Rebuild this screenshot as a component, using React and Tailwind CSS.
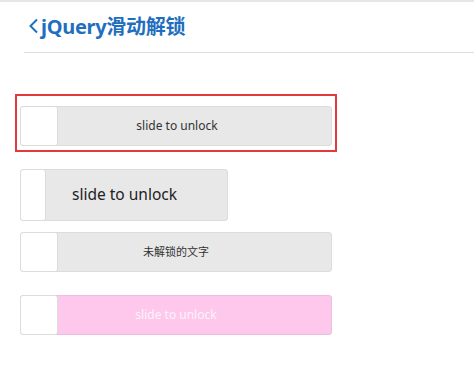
import React from "react";

function Slider({ className, handleW = "w-[38px]", children, textClass }) {
  return (
    <div className={"relative border border-[#dcdcdc] rounded-[3px] flex items-center justify-center " + className}>
      <div className={"absolute left-[-1px] top-[-1px] bottom-[-1px] bg-white border border-[#dcdcdc] rounded-[3px] " + handleW} />
      <span className={textClass}>{children}</span>
    </div>
  );
}

export default function App() {
  return (
    <div className="w-[474px] h-[373px] bg-white overflow-hidden" style={{ fontFamily: '"Noto Sans", "Noto Sans CJK SC", sans-serif' }}>
      <div className="h-[2px] bg-[#e6e6e6]" />
      <div className="ml-6 h-[51px] border-b border-[#dddddd] flex items-center pl-1">
        <svg width="11" height="16" viewBox="0 0 11 16" className="mr-[2px] mt-[-2px]">
          <path d="M9 1.5 L2.5 8 L9 14.5" fill="none" stroke="#1f6fbe" strokeWidth="2" />
        </svg>
        <span className="text-[20px] font-bold text-[#1f6fbe] leading-none tracking-[-0.3px]">jQuery滑动解锁</span>
      </div>
      <div className="mt-[41px] ml-[15px] w-[322px] h-[58px] border-2 border-[#e5383b] pt-[10px] pl-[3px]">
        <Slider className="w-[312px] h-[40px] bg-[#e8e8e8]" textClass="text-[12px] text-[#333] ml-[2px]">slide to unlock</Slider>
      </div>
      <div className="ml-5 mt-[17px]">
        <Slider className="w-[208px] h-[52px] bg-[#e8e8e8]" handleW="w-[26px]" textClass="text-[15.5px] text-[#222] ml-[1px]">slide to unlock</Slider>
      </div>
      <div className="ml-5 mt-[11px]">
        <Slider className="w-[312px] h-[40px] bg-[#e8e8e8]" textClass="text-[11px] text-[#333]">未解锁的文字</Slider>
      </div>
      <div className="ml-5 mt-[23px]">
        <Slider className="w-[312px] h-[40px] bg-[#fdc8ec] border-[#e8c0dc]" textClass="text-[12px] text-[#fff3fb]">slide to unlock</Slider>
      </div>
    </div>
  );
}
